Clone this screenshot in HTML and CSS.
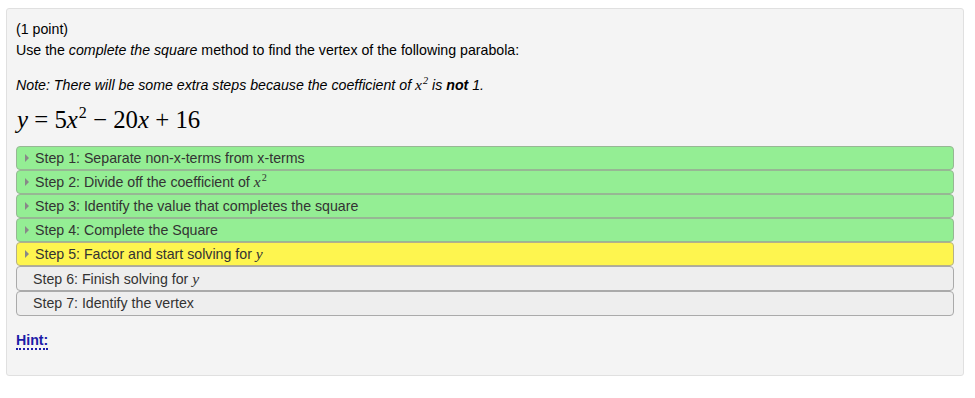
FILE: index.html
```html
<!doctype html>
<html>
<head>
<meta charset="utf-8">
<title>Problem</title>
<link rel="stylesheet" href="styles.css">
</head>
<body>
<div class="prob_box">
	<p class="pts">(1 point)</p>
	<p>Use the <i>complete the square</i> method to find the vertex of the following parabola:</p>
	<p class="note"><i>Note: There will be some extra steps because the coefficient of <span class="mv">x</span><sup>2</sup> is <b>not</b> 1.</i></p>
	<div class="eq"><span class="mv">y</span> = 5<span class="mv">x</span><sup>2</sup> &minus; 20<span class="mv">x</span> + 16</div>
	<div class="steps">
		<div class="step done"><span class="arr"></span>Step 1: Separate non-x-terms from x-terms</div>
		<div class="step done"><span class="arr"></span>Step 2: Divide off the coefficient of <span class="mv">x</span><sup>2</sup></div>
		<div class="step done"><span class="arr"></span>Step 3: Identify the value that completes the square</div>
		<div class="step done"><span class="arr"></span>Step 4: Complete the Square</div>
		<div class="step cur"><span class="arr"></span>Step 5: Factor and start solving for <span class="mv">y</span></div>
		<div class="step off">Step 6: Finish solving for <span class="mv">y</span></div>
		<div class="step off">Step 7: Identify the vertex</div>
	</div>
	<a href="javascript:;" class="hint">Hint:</a>
</div>
</body>
</html>
```
FILE: styles.css
```css
*{margin:0; padding:0;}
body{padding:8px 11px 0 6px; font-family:"Liberation Sans", Arial, sans-serif; font-size:14.2px; color:#000;}
.prob_box{background:#f4f4f4; border:1px solid #e0e0e0; border-radius:3px; padding:12px 9px 25px 9px;}
p{line-height:17px; margin-bottom:0;}
.pts{margin-bottom:4px;}
.note{margin-top:17px;}
.mv{font-family:"Liberation Serif", "Times New Roman", serif; font-style:italic; font-size:1.1em;}
sup{font-family:"Liberation Serif", serif; font-size:0.72em; line-height:0; vertical-align:0; position:relative; top:-0.55em; margin-left:1px;}
.eq{font-family:"Liberation Serif", "Times New Roman", serif; font-size:24.8px; margin-top:8px; height:40px; line-height:36px; padding-left:1px;}
.eq .mv{font-size:1em;}
.eq sup{font-size:16px; top:-0.6em;}
.steps{margin-top:4px;}
.step{height:22px; line-height:22px; border:1px solid #999; border-radius:4px; padding-left:8px; color:#333;}
.done{background:#94ee94; border-color:#97b794;}
.cur{background:#fef54f; border-color:#b5b08a;}
.off{background:#eee; border-color:#aaa; padding-left:16px; height:23px; line-height:23px;}
.arr{display:inline-block; width:0; height:0; border-left:4px solid #888; border-top:4px solid transparent; border-bottom:4px solid transparent; margin-right:6px; vertical-align:1px;}
.step .mv{color:#333;}
.hint{display:inline-block; margin-top:17px; color:#1c1ca8; font-weight:bold; text-decoration:none; border-bottom:2px dotted #1c1ca8; line-height:15px;}
```
